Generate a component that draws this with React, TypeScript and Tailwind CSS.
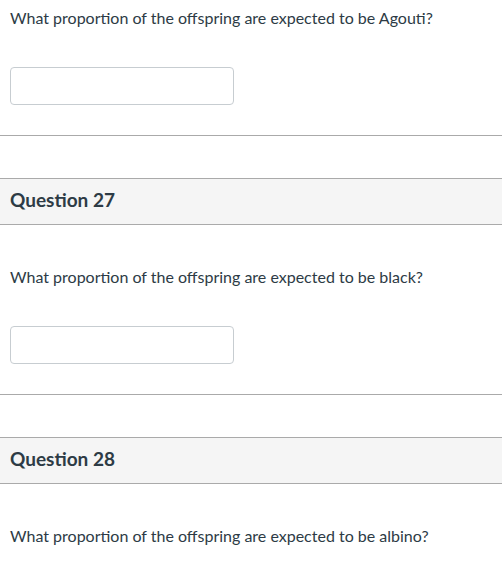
const questions = [
  { prompt: 'What proportion of the offspring are expected to be Agouti?' },
  { number: 27, prompt: 'What proportion of the offspring are expected to be black?' },
  { number: 28, prompt: 'What proportion of the offspring are expected to be albino?' },
];

function QuestionBlock({ number, prompt, last }: { number?: number; prompt: string; last?: boolean }) {
  return (
    <div>
      {number && (
        <div className="mt-[42px] h-[47px] border-y border-[#aaaaaa] bg-[#f5f5f5] px-[10px] pb-[3px] flex items-center">
          <h2 className="text-[19px] leading-[24px] font-bold text-[#2d3b45]">Question {number}</h2>
        </div>
      )}
      <p className={`${number ? 'mt-[40px]' : 'mt-[6px]'} px-[10px] text-[16px] leading-[24px] text-[#2d3b45]`}>
        {prompt}
      </p>
      {!last && (
        <>
          <div className="px-[10px] mt-[37px]">
            <input
              type="text"
              className="block w-[224px] h-[38px] rounded-[4px] border border-[#c7cdd1] bg-white px-2 text-[16px] focus:outline-none"
            />
          </div>
          <hr className="mt-[30px] border-0 border-t border-[#aaaaaa]" />
        </>
      )}
    </div>
  );
}

export default function App() {
  return (
    <div className="min-h-[567px] bg-white font-['Lato',sans-serif] overflow-hidden">
      {questions.map((q, i) => (
        <QuestionBlock key={i} number={q.number} prompt={q.prompt} last={i === questions.length - 1} />
      ))}
    </div>
  );
}
